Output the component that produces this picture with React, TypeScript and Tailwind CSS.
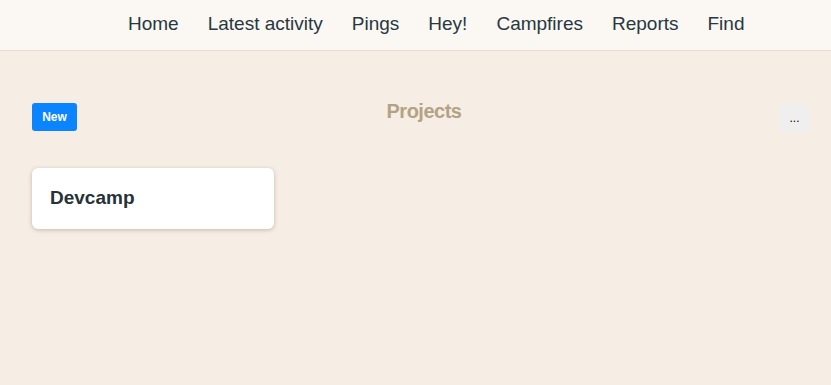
import React from 'react';

const navItems = ['Home', 'Latest activity', 'Pings', 'Hey!', 'Campfires', 'Reports', 'Find'];

export default function App() {
  return (
    <div className="min-h-screen bg-[#f6eee5] font-['Liberation_Sans',Arial,sans-serif]">
      {/* Top nav */}
      <nav className="h-[51px] bg-[#fbf7f3] border-b border-[#e6ddd3] flex items-center pl-[128px] pb-[4px] gap-[29px]">
        {navItems.map((item) => (
          <a key={item} href="#" className="text-[19px] text-[#283840] leading-none">
            {item}
          </a>
        ))}
      </nav>

      <main className="px-8 pt-[48px]">
        {/* Header */}
        <div className="flex justify-between items-start">
          <button className="mt-[4px] h-[28px] w-[45px] rounded-[3px] bg-[#0a84ff] text-white text-[12px] font-bold">
            New
          </button>
          <h1 className="mt-[-2px] ml-[-9px] text-[20px] font-bold text-[#b4a285] tracking-[-0.5px] leading-[28px]">
            Projects
          </h1>
          <button className="mt-[5px] mr-[-10px] h-[28px] w-[29px] rounded-[4px] bg-[#efefef] text-[12px] text-black leading-none">
            ...
          </button>
        </div>

        {/* Projects */}
        <div className="mt-[36px] flex">
          <div className="w-[242px] h-[61px] bg-white rounded-[6px] shadow-[0_1px_4px_rgba(120,100,70,0.4)] flex items-center px-[18px]">
            <span className="text-[19px] font-bold text-[#263238]">Devcamp</span>
          </div>
        </div>
      </main>
    </div>
  );
}
